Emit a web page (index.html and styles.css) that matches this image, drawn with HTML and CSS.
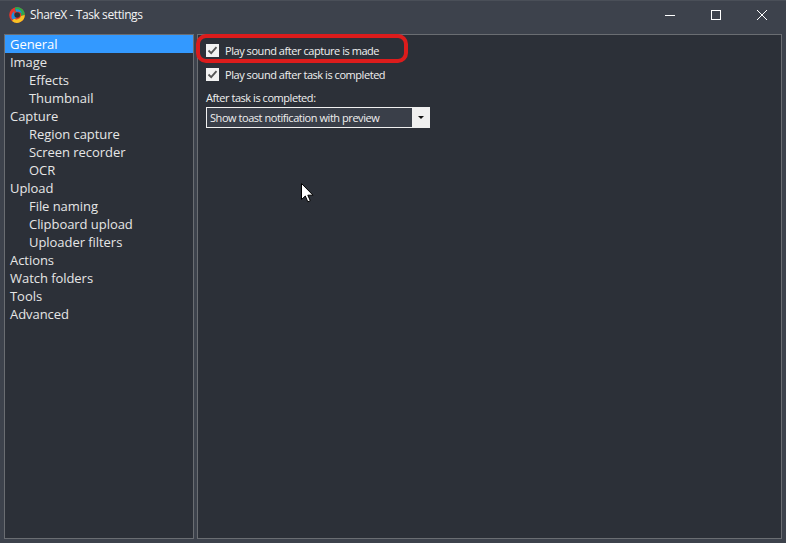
FILE: index.html
```
<!DOCTYPE html>
<html lang="en">
<head>
<meta charset="utf-8">
<title>ShareX - Task settings</title>
<link rel="stylesheet" href="styles.css">
</head>
<body>
<div class="window">
  <header class="titlebar">
    <svg class="logo" width="16" height="16" viewBox="0 0 16 16">
      <circle cx="8" cy="8" r="7.8" fill="#e8352b"/>
      <path d="M6 .4A7.8 7.8 0 0 1 15.8 8L12 9A4.5 4.5 0 0 0 6 3.8Z" fill="#2fa84a"/>
      <path d="M15.8 8A7.8 7.8 0 0 1 3 14L5 11.5A4.5 4.5 0 0 0 12 9Z" fill="#f7c325"/>
      <path d="M6.5 2.5C9.5 1.6 12.5 3.5 13 6.5C11.5 4.8 9.5 4.3 7.5 5Z" fill="#1f8fe0"/>
      <path d="M3.5 12.6C1.6 9.8 2.4 6 5.4 4.2C4.6 6.6 5.2 9 7.5 11Z" fill="#1f8fe0"/>
      <circle cx="8.2" cy="8" r="2.8" fill="#2c3038"/>
    </svg>
    <span class="title">ShareX - Task settings</span>
    <div class="controls">
      <svg class="ctl" width="46" height="30" viewBox="0 0 46 30"><path d="M18 15.5H28" stroke="#fff" fill="none"/></svg>
      <svg class="ctl" width="46" height="30" viewBox="0 0 46 30"><rect x="18.5" y="10.5" width="9" height="9" stroke="#fff" fill="none"/></svg>
      <svg class="ctl" width="46" height="30" viewBox="0 0 46 30"><path d="M18 10L28 20M28 10L18 20" stroke="#fff" fill="none"/></svg>
    </div>
  </header>
  <main class="body">
    <nav class="tree">
      <div class="node selected">General</div>
      <div class="node">Image</div>
      <div class="node child">Effects</div>
      <div class="node child">Thumbnail</div>
      <div class="node">Capture</div>
      <div class="node child">Region capture</div>
      <div class="node child">Screen recorder</div>
      <div class="node child">OCR</div>
      <div class="node">Upload</div>
      <div class="node child">File naming</div>
      <div class="node child">Clipboard upload</div>
      <div class="node child">Uploader filters</div>
      <div class="node">Actions</div>
      <div class="node">Watch folders</div>
      <div class="node">Tools</div>
      <div class="node">Advanced</div>
    </nav>
    <section class="panel">
      <label class="check first"><span class="box"><svg width="13" height="13" viewBox="0 0 13 13"><path d="M2.5 6.5L5.2 9.2L10.5 3.2" stroke="#555" stroke-width="1.8" fill="none"/></svg></span>Play sound after capture is made</label>
      <label class="check second"><span class="box"><svg width="13" height="13" viewBox="0 0 13 13"><path d="M2.5 6.5L5.2 9.2L10.5 3.2" stroke="#555" stroke-width="1.8" fill="none"/></svg></span>Play sound after task is completed</label>
      <div class="caption">After task is completed:</div>
      <div class="combo"><span class="combo-text">Show toast notification with preview</span><span class="combo-btn"><i class="arrow"></i></span></div>
      <div class="highlight"></div>
      <svg class="cursor" width="13" height="20" viewBox="0 0 13 20"><path d="M.5.5V16.5L4.3 13L6.8 18.8L9.3 17.7L6.8 12.2H12Z" fill="#fff" stroke="#000"/></svg>
    </section>
  </main>
</div>
</body>
</html>
```
FILE: styles.css
```
html, body { margin: 0; padding: 0; }
body { width: 786px; height: 543px; overflow: hidden; background: #3d424c; }
.window { width: 786px; height: 543px; display: flex; flex-direction: column; background: #3d424c; color: #f0f0f0; font-family: "Open Sans", "Noto Sans", sans-serif; border-top: 1px solid #4a4f58; box-sizing: border-box; }
.titlebar { height: 30px; flex: none; display: flex; align-items: flex-start; padding: 0 1px 0 9px; }
.logo { flex: none; margin: 6px 5px 0 0; }
.title { font-size: 12px; line-height: 28px; letter-spacing: -0.4px; color: #f4f4f4; }
.controls { margin-left: auto; display: flex; }
.ctl { display: block; margin-top: -1px; }
.body { flex: 1; display: flex; gap: 3px; padding: 3px 4px 4px 4px; min-height: 0; }
.tree { width: 190px; box-sizing: border-box; border: 1px solid #6a6d72; background: #2c3038; padding: 0; }
.node { height: 18px; line-height: 18px; font-size: 13px; letter-spacing: -0.05px; padding-left: 5px; color: #e6e6e6; white-space: nowrap; }
.child { padding-left: 24px; }
.selected { background: #3399ff; color: #fff; }
.panel { position: relative; flex: 1; box-sizing: border-box; border: 1px solid #6a6d72; background: #2c3038; padding: 7px 8px; font-size: 11px; letter-spacing: -0.45px; color: #f0f0f0; }
.check { display: flex; align-items: center; height: 16px; white-space: nowrap; }
.second { margin-top: 8px; }
.box { width: 13px; height: 13px; background: #f2f2f2; margin-right: 6px; flex: none; display: block; }
.box svg { display: block; }
.caption { margin-top: 8px; height: 16px; line-height: 16px; }
.combo { width: 224px; height: 21px; margin-top: 1px; border: 1px solid #f0f0f0; box-sizing: border-box; display: flex; align-items: center; background: #3a3f49; }
.combo-text { flex: 1; padding-left: 3px; }
.combo-btn { width: 17px; height: 100%; background: #f0f0f0; display: flex; align-items: center; justify-content: center; }
.arrow { width: 0; height: 0; border-left: 3px solid transparent; border-right: 3px solid transparent; border-top: 3px solid #111; }
.highlight { position: absolute; left: -2px; top: -1px; width: 212px; height: 29px; border: 4px solid #dc1c1c; border-radius: 10px; box-sizing: border-box; }
.cursor { position: absolute; left: 103px; top: 148px; }
```
